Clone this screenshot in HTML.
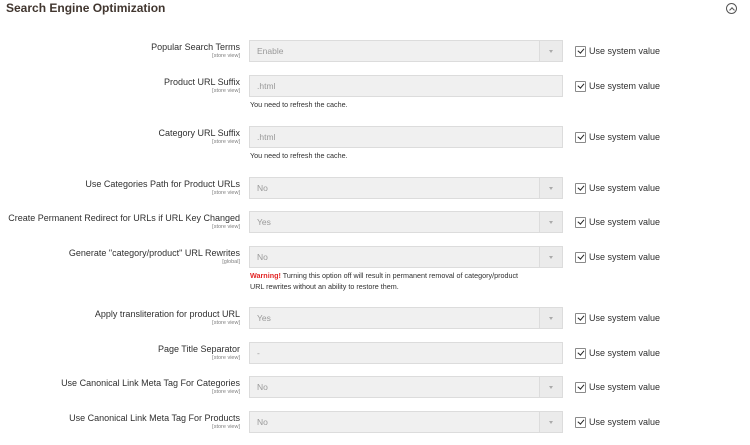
<!DOCTYPE html>
<html><head><style>
body{margin:0;width:750px;height:445px;background:#fff;font-family:"Liberation Sans",sans-serif;position:relative;overflow:hidden;color:#303030}
h1{position:absolute;left:6px;top:0;margin:0;font-size:12px;font-weight:bold;color:#41362f;line-height:16px}
.tog{position:absolute;left:726px;top:3px;width:9px;height:9px;border:1px solid #555;border-radius:50%}
.tog:after{content:"";position:absolute;left:3px;top:3.5px;width:3px;height:3px;border-left:1px solid #555;border-top:1px solid #555;transform:rotate(45deg)}
.lab{position:absolute;right:510px;text-align:right;font-size:9px;line-height:11px;color:#303030;white-space:nowrap;padding-top:1px}
.lab small{display:block;font-size:5.5px;color:#808080;line-height:7px}
.f{position:absolute;left:249px;border:1px solid #dcdcdc;background:#f0f0f0;font-size:8.5px;color:#999;line-height:21px;padding-left:7px;box-sizing:border-box;width:314px;height:22px}
.f.s:after{content:"";position:absolute;right:0;top:0;width:22px;height:20px;border-left:1px solid #dcdcdc;background:#ebebeb}
.f.s:before{content:"";position:absolute;right:9px;top:9px;border:2.5px solid transparent;border-top:3px solid #aaa;z-index:1}
.c{position:absolute;left:575px;width:9px;height:9px;border:1px solid #8a8a8a;border-radius:1px;background:#fff}
.c:after{content:"";position:absolute;left:2.5px;top:0;width:2.5px;height:5px;border-right:1.3px solid #222;border-bottom:1.3px solid #222;transform:rotate(40deg)}
.u{position:absolute;left:589px;font-size:9px;color:#303030;line-height:11px}
.h{position:absolute;left:250px;font-size:7.2px;color:#303030;line-height:11px}
</style></head><body>
<h1>Search Engine Optimization</h1><div class="tog"></div>

<div class="lab" style="top:41px">Popular Search Terms<small>[store view]</small></div>
<div class="f s" style="top:40px">Enable</div><div class="c" style="top:46px"></div><div class="u" style="top:46px">Use system value</div>

<div class="lab" style="top:76px">Product URL Suffix<small>[store view]</small></div>
<div class="f" style="top:75px">.html</div><div class="c" style="top:81px"></div><div class="u" style="top:81px">Use system value</div>
<div class="h" style="top:99px">You need to refresh the cache.</div>

<div class="lab" style="top:127px">Category URL Suffix<small>[store view]</small></div>
<div class="f" style="top:126px">.html</div><div class="c" style="top:132px"></div><div class="u" style="top:132px">Use system value</div>
<div class="h" style="top:150px">You need to refresh the cache.</div>

<div class="lab" style="top:178px">Use Categories Path for Product URLs<small>[store view]</small></div>
<div class="f s" style="top:177px">No</div><div class="c" style="top:183px"></div><div class="u" style="top:183px">Use system value</div>

<div class="lab" style="top:212px">Create Permanent Redirect for URLs if URL Key Changed<small>[store view]</small></div>
<div class="f s" style="top:211px">Yes</div><div class="c" style="top:217px"></div><div class="u" style="top:217px">Use system value</div>

<div class="lab" style="top:247px">Generate "category/product" URL Rewrites<small>[global]</small></div>
<div class="f s" style="top:246px">No</div><div class="c" style="top:252px"></div><div class="u" style="top:252px">Use system value</div>
<div class="h" style="top:270px"><b style="color:#e22626">Warning!</b> Turning this option off will result in permanent removal of category/product<br>URL rewrites without an ability to restore them.</div>

<div class="lab" style="top:308px">Apply transliteration for product URL<small>[store view]</small></div>
<div class="f s" style="top:307px">Yes</div><div class="c" style="top:313px"></div><div class="u" style="top:313px">Use system value</div>

<div class="lab" style="top:343px">Page Title Separator<small>[store view]</small></div>
<div class="f" style="top:342px">-</div><div class="c" style="top:348px"></div><div class="u" style="top:348px">Use system value</div>

<div class="lab" style="top:377px">Use Canonical Link Meta Tag For Categories<small>[store view]</small></div>
<div class="f s" style="top:376px">No</div><div class="c" style="top:382px"></div><div class="u" style="top:382px">Use system value</div>

<div class="lab" style="top:412px">Use Canonical Link Meta Tag For Products<small>[store view]</small></div>
<div class="f s" style="top:411px">No</div><div class="c" style="top:417px"></div><div class="u" style="top:417px">Use system value</div>
</body></html>
